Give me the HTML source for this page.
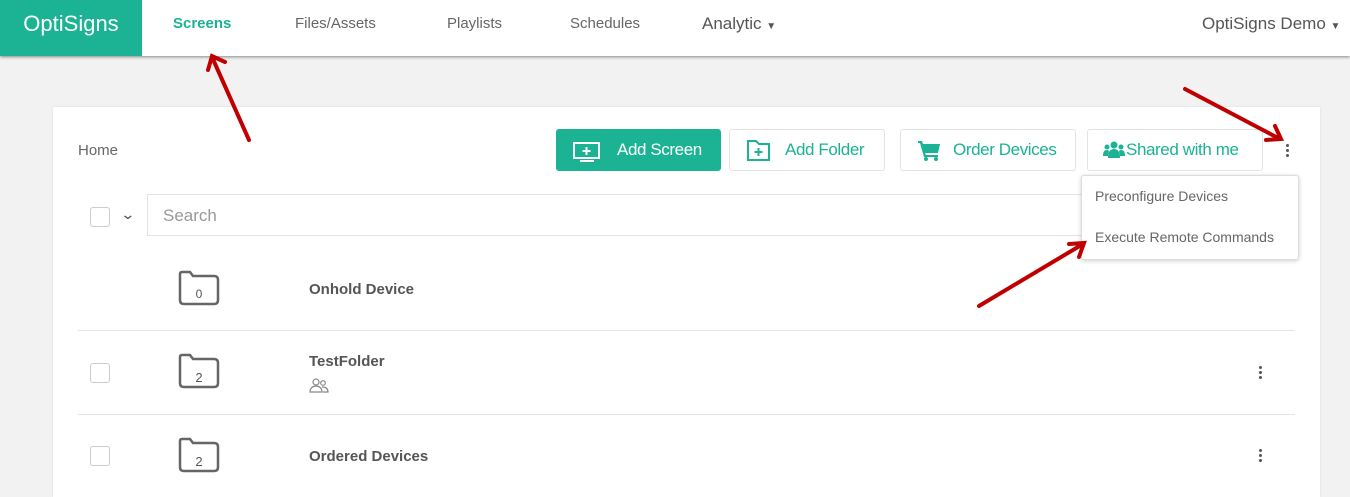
<!DOCTYPE html><html><head><style>
body{margin:0;width:1350px;height:485px;overflow:hidden;background:#f2f2f2;font-family:"Liberation Sans",sans-serif;position:relative}
.hdr{position:absolute;left:0;top:0;width:1350px;height:56px;background:#fff;box-shadow:0 1px 3px rgba(0,0,0,.45)}
.logo{position:absolute;left:0;top:0;width:142px;height:56px;background:#1bb394;color:#fff;font-size:22px;line-height:48px;text-align:center}
.nav{position:absolute;top:15px;font-size:15px;color:#666}
.card{position:absolute;left:53px;top:107px;width:1267px;height:390px;background:#fff;box-shadow:0 0 2px rgba(0,0,0,.1)}
.btn{position:absolute;top:129px;height:42px;border:1px solid #e3e3e3;border-radius:3px;background:#fff;color:#1bb394;font-size:17px;letter-spacing:-0.4px;box-sizing:border-box;line-height:40px}
.t{position:absolute}
.cb{position:absolute;width:20px;height:20px;border:1px solid #ccc;border-radius:3px;box-sizing:border-box;background:#fff}
.sep{position:absolute;left:78px;width:1217px;height:1px;background:#e5e5e5}
.name{position:absolute;left:309px;font-size:15px;font-weight:bold;color:#555}
.dots{position:absolute;width:3px}
.dots i{display:block;width:3px;height:3px;background:#555;margin-bottom:2px;border-radius:50%}
</style></head><body>
<div class="hdr">
<div class="logo">OptiSigns</div>
<div class="nav" style="left:173px;color:#1bb394;font-weight:bold">Screens</div>
<div class="nav" style="left:295px">Files/Assets</div>
<div class="nav" style="left:447px">Playlists</div>
<div class="nav" style="left:570px">Schedules</div>
<div class="nav" style="left:702px;font-size:17px;top:14px;color:#555">Analytic <span style="font-size:10px">▼</span></div>
<div class="nav" style="left:1202px;font-size:17px;top:14px;color:#555">OptiSigns Demo <span style="font-size:10px">▼</span></div>
</div>
<div class="card"></div>
<div class="t" style="left:78px;top:142px;font-size:15px;color:#666">Home</div>
<div class="btn" style="left:556px;width:165px;background:#1bb394;border-color:#1bb394;color:#fff">
<svg style="position:absolute;left:15px;top:11px" width="30" height="22" viewBox="0 0 30 22" fill="none" stroke="#fff" stroke-width="2"><rect x="2" y="2" width="25" height="15"/><path d="M8 20h14M14.5 6v8M10.5 10h8"/></svg>
<span style="position:absolute;left:60px">Add Screen</span></div>
<div class="btn" style="left:729px;width:156px">
<svg style="position:absolute;left:16px;top:9px" width="26" height="24" viewBox="0 0 26 24" fill="none" stroke="#1bb394" stroke-width="2"><path d="M2 2h8l3 3h10v16H2z"/><path d="M12.5 9v8M8.5 13h8"/></svg>
<span style="position:absolute;left:55px">Add Folder</span></div>
<div class="btn" style="left:900px;width:176px">
<svg style="position:absolute;left:16px;top:10px" width="24" height="22" viewBox="0 0 24 22" fill="#1bb394"><path d="M1 1h4l1 3h17l-2 9H8l1 2h12v2H7L3 3H1z"/><circle cx="9" cy="19" r="2"/><circle cx="19" cy="19" r="2"/></svg>
<span style="position:absolute;left:52px">Order Devices</span></div>
<div class="btn" style="left:1087px;width:176px">
<svg style="position:absolute;left:15px;top:11px" width="22" height="18" viewBox="0 0 22 18" fill="#1bb394"><circle cx="11" cy="4" r="3.5"/><circle cx="4" cy="6" r="2.5"/><circle cx="18" cy="6" r="2.5"/><path d="M5 17c0-6 2-9 6-9s6 3 6 9z"/><path d="M0 15c0-4 1-6 4-6 1 0 2 1 2 1l-1 5z M22 15c0-4-1-6-4-6-1 0-2 1-2 1l1 5z"/></svg>
<span style="position:absolute;left:38px">Shared with me</span></div>
<div class="dots" style="left:1286px;top:144px"><i></i><i></i><i></i></div>
<div class="cb" style="left:90px;top:207px"></div>
<div class="t" style="left:122px;top:206px;font-size:14px;color:#555;transform:scaleX(1.3)">⌄</div>
<div style="position:absolute;left:147px;top:194px;width:960px;height:42px;border:1px solid #e3e3e3;box-sizing:border-box"><span style="position:absolute;left:15px;top:11px;font-size:17px;color:#999">Search</span></div>
<div style="position:absolute;left:1081px;top:175px;width:216px;height:83px;background:#fff;border:1px solid #ddd;border-radius:3px;box-shadow:0 1px 4px rgba(0,0,0,.2);font-size:14px;color:#666">
<div style="position:absolute;left:13px;top:12px">Preconfigure Devices</div>
<div style="position:absolute;left:13px;top:53px">Execute Remote Commands</div></div>
<svg style="position:absolute;left:178px;top:270px" width="42" height="36" viewBox="0 0 42 36" fill="none" stroke="#666" stroke-width="2.5"><path d="M2 4q0-2 2-2h8l3 4h21q4 0 4 4v20q0 4-4 4H6q-4 0-4-4z"/><text x="21" y="28" font-size="12" fill="#555" stroke="none" text-anchor="middle" font-family="Liberation Sans">0</text></svg>
<div class="name" style="top:281px">Onhold Device</div>
<div class="sep" style="top:330px"></div>
<div class="cb" style="left:90px;top:363px"></div>
<svg style="position:absolute;left:178px;top:353px" width="42" height="36" viewBox="0 0 42 36" fill="none" stroke="#666" stroke-width="2.5"><path d="M2 4q0-2 2-2h8l3 4h21q4 0 4 4v20q0 4-4 4H6q-4 0-4-4z"/><text x="21" y="29" font-size="13" fill="#555" stroke="none" text-anchor="middle" font-family="Liberation Sans">2</text></svg>
<div class="name" style="top:353px">TestFolder</div>
<svg style="position:absolute;left:309px;top:378px" width="20" height="16" viewBox="0 0 20 16" fill="none" stroke="#888" stroke-width="1.2"><circle cx="7" cy="4" r="3"/><circle cx="14" cy="5" r="2.3"/><path d="M1 14c0-4 3-6 6-6s6 2 6 6z M13 9c3 0 6 1 6 5h-5"/></svg>
<div class="dots" style="left:1259px;top:366px"><i></i><i></i><i></i></div>
<div class="sep" style="top:414px"></div>
<div class="cb" style="left:90px;top:446px"></div>
<svg style="position:absolute;left:178px;top:437px" width="42" height="36" viewBox="0 0 42 36" fill="none" stroke="#666" stroke-width="2.5"><path d="M2 4q0-2 2-2h8l3 4h21q4 0 4 4v20q0 4-4 4H6q-4 0-4-4z"/><text x="21" y="29" font-size="13" fill="#555" stroke="none" text-anchor="middle" font-family="Liberation Sans">2</text></svg>
<div class="name" style="top:448px">Ordered Devices</div>
<div class="dots" style="left:1259px;top:449px"><i></i><i></i><i></i></div>
<svg style="position:absolute;left:0;top:0" width="1350" height="485" fill="none" stroke="#c00000" stroke-width="4" stroke-linecap="round">
<path d="M249 140L212 57M208 70L212 56L225 62"/>
<path d="M1185 89L1280 139M1266 140L1281 139L1275 126"/>
<path d="M979 306L1083 244M1069 244L1084 243L1079 257"/>
</svg>
</body></html>
